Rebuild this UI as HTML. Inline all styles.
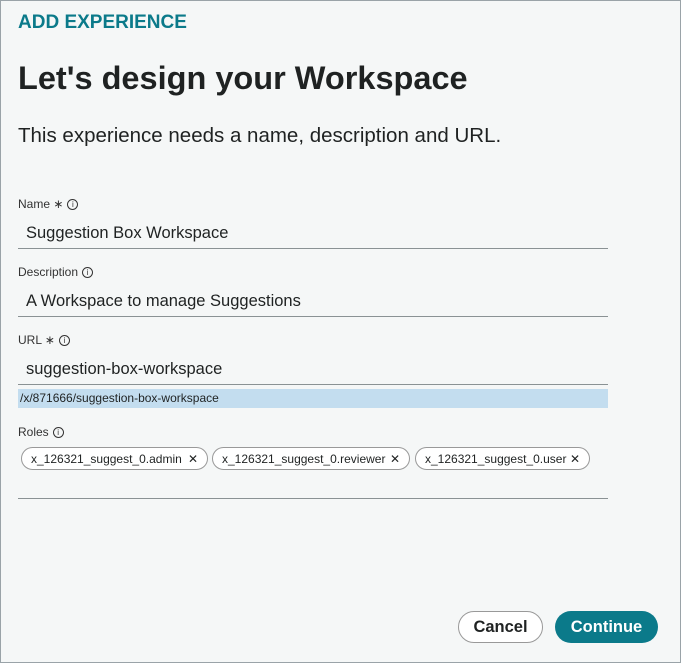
<html><head><style>
body{margin:0;width:681px;height:663px;background:#f5f7f7;font-family:"Liberation Sans",sans-serif;color:#1f2222;position:relative;overflow:hidden}
.frame{position:absolute;left:0;top:0;width:679px;height:661px;border:1px solid #9aa3a8}
.a{position:absolute;white-space:nowrap}
.lbl{font-size:12px;color:#333}
.inp{font-size:16.5px;left:26px}
.line{position:absolute;left:18px;width:590px;height:1px;background:#8a9294}
.i{display:inline-block;width:9px;height:9px;border:1px solid #333;border-radius:50%;font-size:8px;line-height:9px;text-align:center;vertical-align:1px;margin-left:4px}
.chip{position:absolute;top:447px;height:23px;border:1px solid #999;border-radius:12px;background:#fff;font-size:12px;line-height:22px;padding:0 9px;box-sizing:border-box;white-space:nowrap;overflow:hidden}
.chip b{font-weight:normal;float:right}
.btn{position:absolute;top:611px;height:32px;border-radius:16px;font-size:16.5px;font-weight:bold;line-height:31px;text-align:center;box-sizing:border-box}
</style></head><body><div class="frame"></div>
<div class="a" style="left:18px;top:12px;font-size:19px;font-weight:bold;color:#0b7a8a">ADD EXPERIENCE</div>
<div class="a" style="left:18px;top:60px;font-size:32.5px;font-weight:bold">Let's design your Workspace</div>
<div class="a" style="left:18px;top:124px;font-size:20.5px">This experience needs a name, description and URL.</div>
<div class="a lbl" style="left:18px;top:197px">Name ∗<span class="i">i</span></div>
<div class="a inp" style="top:224px">Suggestion Box Workspace</div><div class="line" style="top:248px"></div>
<div class="a lbl" style="left:18px;top:265px">Description<span class="i">i</span></div>
<div class="a inp" style="top:292px">A Workspace to manage Suggestions</div><div class="line" style="top:316px"></div>
<div class="a lbl" style="left:18px;top:333px">URL ∗<span class="i">i</span></div>
<div class="a inp" style="top:360px">suggestion-box-workspace</div><div class="line" style="top:384px"></div>
<div class="a" style="left:18px;top:389px;width:590px;height:19px;background:#c3ddef;font-size:12px;line-height:19px;padding-left:2px;box-sizing:border-box">/x/871666/suggestion-box-workspace</div>
<div class="a lbl" style="left:18px;top:425px">Roles<span class="i">i</span></div>
<div class="chip" style="left:21px;width:187px">x_126321_suggest_0.admin<b>✕</b></div>
<div class="chip" style="left:212px;width:198px">x_126321_suggest_0.reviewer<b>✕</b></div>
<div class="chip" style="left:415px;width:175px">x_126321_suggest_0.user<b>✕</b></div>
<div class="line" style="top:498px"></div>
<div class="btn" style="left:458px;width:85px;border:1px solid #999;background:#fff">Cancel</div>
<div class="btn" style="left:555px;width:103px;background:#0b7a8a;color:#fff;line-height:32px">Continue</div>
</body></html>
